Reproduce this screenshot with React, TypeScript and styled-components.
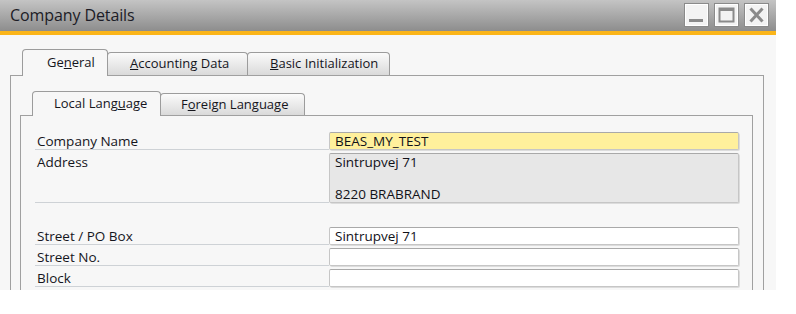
import React from 'react';
import styled, { createGlobalStyle } from 'styled-components';

const Global = createGlobalStyle`
  html, body { margin: 0; padding: 0; background: #ffffff; }
  body { font-family: "Open Sans", "Noto Sans", sans-serif; color: #15151c; }
  * { box-sizing: border-box; }
`;

const Window = styled.div`
  width: 776px;
  height: 290px;
  overflow: hidden;
  display: flex;
  flex-direction: column;
  background: #f7f7f7;
`;

const TitleBar = styled.div`
  flex: none;
  height: 35px;
  display: flex;
  align-items: flex-start;
  justify-content: space-between;
  background: linear-gradient(#c4c4c4, #8d8d8d);
  border-bottom: 4px solid #fbb519;
  padding: 3px 7px 0 10px;
`;

const Title = styled.div`
  font-size: 16px;
  line-height: 25px;
  color: #1c1c26;
  letter-spacing: -0.1px;
`;

const TitleButtons = styled.div`
  display: flex;
  gap: 5px;
`;

const TitleButton = styled.div`
  width: 25px;
  height: 24px;
  border: 1px solid #8a8a8a;
  background: #f3f3f3;
  box-shadow: inset 0 0 0 1px #ffffff;
  display: flex;
  align-items: center;
  justify-content: center;
`;

const Body = styled.div`
  flex: 1;
  display: flex;
  flex-direction: column;
  padding: 13px 12px 0 10px;
`;

const TabStrip = styled.div<{ $indent: number; $height: number }>`
  display: flex;
  align-items: flex-end;
  height: ${p => p.$height}px;
  padding-left: ${p => p.$indent}px;
  flex: none;
`;

const Tab = styled.div<{ $active?: boolean; $width: number; $height: number; $pad: number }>`
  position: relative;
  width: ${p => p.$width}px;
  height: ${p => p.$height}px;
  padding-left: ${p => p.$pad}px;
  border: 1px solid #9c9c9c;
  border-bottom: none;
  border-radius: 4px 4px 0 0;
  font-size: 13px;
  line-height: ${p => p.$height - 2}px;
  white-space: nowrap;
  color: #15151c;
  background: ${p => (p.$active ? '#f7f7f7' : 'linear-gradient(#fbfbfb, #dadada)')};
  ${p => (p.$active ? 'z-index: 2; margin-bottom: -1px; height: ' + (p.$height + 1) + 'px;' : '')}
  & + & { margin-left: -1px; }
`;

const Panel = styled.div<{ $pad: string }>`
  flex: 1;
  display: flex;
  flex-direction: column;
  border: 1px solid #a0a0a0;
  border-bottom: none;
  padding: ${p => p.$pad};
`;

const Form = styled.div`
  display: grid;
  grid-template-columns: 294px 1fr;
  row-gap: 3px;
`;

const Label = styled.div<{ $h: number }>`
  height: ${p => p.$h}px;
  padding-left: 2px;
  font-size: 13.5px;
  line-height: 19px;
  color: #15151c;
  border-bottom: 1px solid #ced2d6;
  white-space: nowrap;
`;

const Field = styled.div<{ $h: number; $bg: string }>`
  height: ${p => p.$h}px;
  background: ${p => p.$bg};
  border: 1px solid #c6c6c6;
  border-top-color: #a9a9a9;
  border-radius: 2px;
  box-shadow: 1px 1px 0 #dcdcdc;
  padding: 0 5px;
  font-size: 13.5px;
  line-height: 16px;
  white-space: pre;
  color: #111118;
`;

const Spacer = styled.div`
  height: 18px;
  grid-column: 1 / span 2;
`;

type Row = { label: string; value: string; h?: number; bg?: string } | null;

const rows: Row[] = [
  { label: 'Company Name', value: 'BEAS_MY_TEST', bg: '#fff09c' },
  { label: 'Address', value: 'Sintrupvej 71\n\n8220 BRABRAND', h: 50, bg: '#e7e7e7' },
  null,
  { label: 'Street / PO Box', value: 'Sintrupvej 71' },
  { label: 'Street No.', value: '' },
  { label: 'Block', value: '' },
];

export default function App() {
  return (
    <>
      <Global />
      <Window>
        <TitleBar>
          <Title>Company Details</Title>
          <TitleButtons>
            <TitleButton>
              <svg width="17" height="16" viewBox="0 0 17 16">
                <rect x="1" y="12" width="14" height="3" fill="#8a8a8a" />
              </svg>
            </TitleButton>
            <TitleButton>
              <svg width="17" height="16" viewBox="0 0 17 16">
                <rect x="1.5" y="1.5" width="14" height="13" fill="none" stroke="#8a8a8a" strokeWidth="2" />
                <rect x="1" y="1" width="15" height="3" fill="#8a8a8a" />
              </svg>
            </TitleButton>
            <TitleButton>
              <svg width="17" height="16" viewBox="0 0 17 16">
                <path d="M2.5 1.5 L14.5 14.5 M14.5 1.5 L2.5 14.5" stroke="#8a8a8a" strokeWidth="3" />
              </svg>
            </TitleButton>
          </TitleButtons>
        </TitleBar>
        <Body>
          <TabStrip $indent={12} $height={27}>
            <Tab $active $width={86} $height={26} $pad={24}>
              Ge<u>n</u>eral
            </Tab>
            <Tab $width={141} $height={23} $pad={22}>
              <u>A</u>ccounting Data
            </Tab>
            <Tab $width={143} $height={23} $pad={22}>
              <u>B</u>asic Initialization
            </Tab>
          </TabStrip>
          <Panel $pad="14px 10px 0 9px">
            <TabStrip $indent={12} $height={25}>
              <Tab $active $width={129} $height={24} $pad={21}>
                Local Lang<u>u</u>age
              </Tab>
              <Tab $width={145} $height={22} $pad={20}>
                F<u>o</u>reign Language
              </Tab>
            </TabStrip>
            <Panel $pad="16px 13px 0 14px">
              <Form>
                {rows.map((r, i) =>
                  r === null ? (
                    <Spacer key={i} />
                  ) : (
                    <React.Fragment key={i}>
                      <Label $h={r.h ?? 18}>{r.label}</Label>
                      <Field $h={r.h ?? 18} $bg={r.bg ?? '#ffffff'}>
                        {r.value}
                      </Field>
                    </React.Fragment>
                  )
                )}
              </Form>
            </Panel>
          </Panel>
        </Body>
      </Window>
    </>
  );
}
